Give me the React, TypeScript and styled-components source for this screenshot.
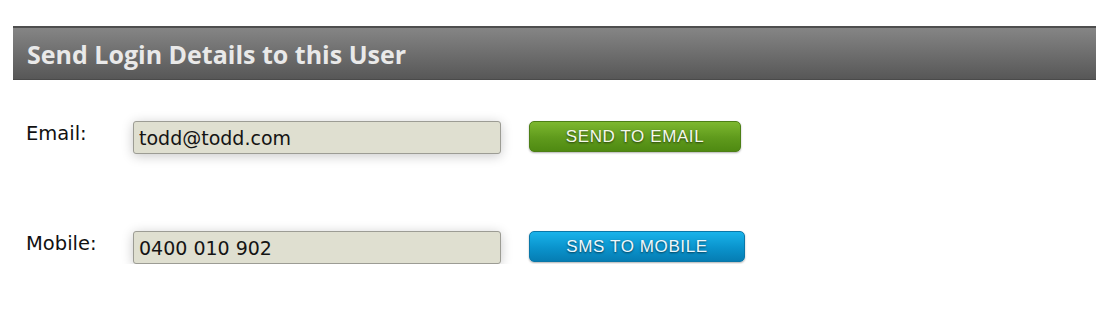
import styled, { createGlobalStyle } from "styled-components";

const GlobalStyle = createGlobalStyle`
  body {
    margin: 0;
    background: #ffffff;
    font-family: "DejaVu Sans", Verdana, sans-serif;
  }
`;

const Page = styled.div`
  padding: 26px 0 0 13px;
`;

const Header = styled.div`
  height: 51px;
  display: flex;
  align-items: center;
  padding-left: 14px;
  background: linear-gradient(to bottom, #858585 0%, #6e6e6e 50%, #575757 100%);
  border-top: 2px solid #4e4e4e;
  border-bottom: 1px solid #4a4a4a;
`;

const Title = styled.h2`
  margin: 0;
  font-family: "Open Sans", sans-serif;
  font-weight: 700;
  font-size: 25px;
  color: #e9e9e9;
`;

const Form = styled.div`
  display: flex;
  flex-direction: column;
  gap: 77px;
  padding: 41px 0 0 13px;
`;

const Row = styled.div`
  display: flex;
  align-items: flex-start;
`;

const Label = styled.label`
  width: 107px;
  flex: none;
  font-family: "DejaVu Sans", sans-serif;
  font-size: 19.5px;
  color: #111;
  padding-top: 1px;
`;

const Field = styled.input`
  box-sizing: border-box;
  width: 368px;
  height: 33px;
  margin-right: 28px;
  padding: 1px 5px 0;
  font-family: "DejaVu Sans", sans-serif;
  font-size: 19px;
  color: #141414;
  background: #dfdfd0;
  border: 1px solid #9c9c94;
  border-radius: 3px;
  box-shadow: 0 2px 12px rgba(0, 0, 0, 0.22);
  outline: none;
`;

const Button = styled.button<{ $tone: "green" | "blue"; $w: number }>`
  width: ${(p) => p.$w}px;
  height: 31px;
  border-radius: 5px;
  font-family: "Liberation Sans", Arial, sans-serif;
  font-size: 17px;
  letter-spacing: 0.6px;
  text-shadow: 0 1px 2px rgba(0, 0, 0, 0.6);
  cursor: pointer;
  padding: 0;
  ${(p) =>
    p.$tone === "green"
      ? `
    color: #f4f9ec;
    background: linear-gradient(to bottom, #7db82f 0%, #5f9a1c 55%, #4f8a12 100%);
    border: 1px solid #4d7f16;
  `
      : `
    color: #eef8fd;
    background: linear-gradient(to bottom, #19b3ea 0%, #0a93cc 55%, #067db3 100%);
    border: 1px solid #0a77a8;
  `}
  box-shadow: 0 1px 2px rgba(0, 0, 0, 0.3);
`;

export default function App() {
  return (
    <>
      <GlobalStyle />
      <Page>
        <Header>
          <Title>Send Login Details to this User</Title>
        </Header>
        <Form>
          <Row>
            <Label>Email:</Label>
            <Field defaultValue="todd@todd.com" />
            <Button $tone="green" $w={212}>SEND TO EMAIL</Button>
          </Row>
          <Row>
            <Label>Mobile:</Label>
            <Field defaultValue="0400 010 902" />
            <Button $tone="blue" $w={216}>SMS TO MOBILE</Button>
          </Row>
        </Form>
      </Page>
    </>
  );
}
